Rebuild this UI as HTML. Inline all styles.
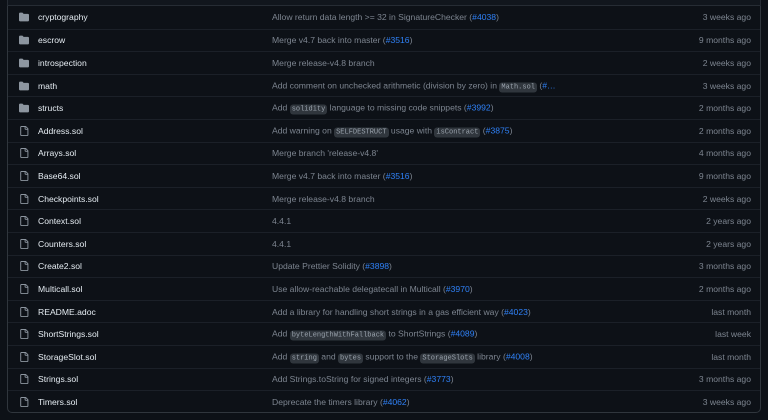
<!DOCTYPE html>
<html><head><meta charset="utf-8"><style>
*{margin:0;padding:0;box-sizing:border-box}
body{width:768px;height:420px;background:#0d1117;overflow:hidden;font-family:"Liberation Sans",sans-serif;font-size:8.6px;color:#e6edf3;position:relative}
.top{position:absolute;left:7px;right:7px;top:-2px;height:8px;background:#11161d;border:1px solid #262c34;border-top:none}
.box{position:absolute;left:7px;right:7px;top:6px;height:407px;border:1px solid #30363d;border-top:none;border-radius:0 0 5px 5px}
.row{position:absolute;left:0;right:0;height:22.67px;border-top:1px solid #1b2028}
.row>*{position:absolute;top:50%;transform:translateY(-50%);white-space:nowrap}
.ic{left:11px;width:10px;height:10px}
.nm{left:30px;color:#e6edf3}
.msg{left:264px;color:#7d8590}
.dt{right:9px;color:#7d8590}
a{color:#2f81f7;text-decoration:none}
code{font-family:"Liberation Mono",monospace;font-size:7px;background:#30363d;color:#9aa3ad;border-radius:3px;padding:1px 2px}
</style></head><body>
<div class="top"></div>
<div class="box" id="b"></div>
<script>
const F='<svg class="ic" viewBox="0 0 16 16"><path fill="#8d96a0" d="M1.75 1A1.75 1.75 0 0 0 0 2.75v10.5C0 14.22.78 15 1.75 15h12.5A1.75 1.75 0 0 0 16 13.25v-8.5A1.75 1.75 0 0 0 14.25 3H7.5a.25.25 0 0 1-.2-.1l-.9-1.2C6.07 1.26 5.55 1 5 1H1.75Z"/></svg>';
const D='<svg class="ic" viewBox="0 0 16 16"><path fill="#8d96a0" d="M2 1.75C2 .78 2.78 0 3.75 0h6.59c.46 0 .91.18 1.240.51l2.910 2.910c.33.33.51.78.51 1.24v9.59A1.75 1.75 0 0 1 13.25 16h-9.5A1.75 1.75 0 0 1 2 14.25Zm1.75-.25a.25.25 0 0 0-.25.25v12.5c0 .14.11.25.25.25h9.5a.25.25 0 0 0 .25-.25V6h-2.75A1.75 1.75 0 0 1 9 4.25V1.5Zm6.75.06V4.25c0 .14.11.25.25.25h2.69l-.01-.01-2.92-2.92Z"/></svg>';
const l=n=>'(<a>#'+n+'</a>)';
const rows=[
[F,'cryptography','Allow return data length >= 32 in SignatureChecker '+l(4038),'3 weeks ago'],
[F,'escrow','Merge v4.7 back into master '+l(3516),'9 months ago'],
[F,'introspection','Merge release-v4.8 branch','2 weeks ago'],
[F,'math','Add comment on unchecked arithmetic (division by zero) in <code>Math.sol</code> (<a>#…</a>','3 weeks ago'],
[F,'structs','Add <code>solidity</code> language to missing code snippets '+l(3992),'2 months ago'],
[D,'Address.sol','Add warning on <code>SELFDESTRUCT</code> usage with <code>isContract</code> '+l(3875),'2 months ago'],
[D,'Arrays.sol',"Merge branch 'release-v4.8'",'4 months ago'],
[D,'Base64.sol','Merge v4.7 back into master '+l(3516),'9 months ago'],
[D,'Checkpoints.sol','Merge release-v4.8 branch','2 weeks ago'],
[D,'Context.sol','4.4.1','2 years ago'],
[D,'Counters.sol','4.4.1','2 years ago'],
[D,'Create2.sol','Update Prettier Solidity '+l(3898),'3 months ago'],
[D,'Multicall.sol','Use allow-reachable delegatecall in Multicall '+l(3970),'2 months ago'],
[D,'README.adoc','Add a library for handling short strings in a gas efficient way '+l(4023),'last month'],
[D,'ShortStrings.sol','Add <code>byteLengthWithFallback</code> to ShortStrings '+l(4089),'last week'],
[D,'StorageSlot.sol','Add <code>string</code> and <code>bytes</code> support to the <code>StorageSlots</code> library '+l(4008),'last month'],
[D,'Strings.sol','Add Strings.toString for signed integers '+l(3773),'3 months ago'],
[D,'Timers.sol','Deprecate the timers library '+l(4062),'3 weeks ago']];
let h='';rows.forEach((r,i)=>{h+='<div class="row" style="top:'+(i*22.6)+'px;'+(i==0?'border-top:none':'')+'">'+r[0]+'<span class="nm">'+r[1]+'</span><span class="msg">'+r[2]+'</span><span class="dt">'+r[3]+'</span></div>'});
document.getElementById('b').innerHTML=h;
</script>
</body></html>
